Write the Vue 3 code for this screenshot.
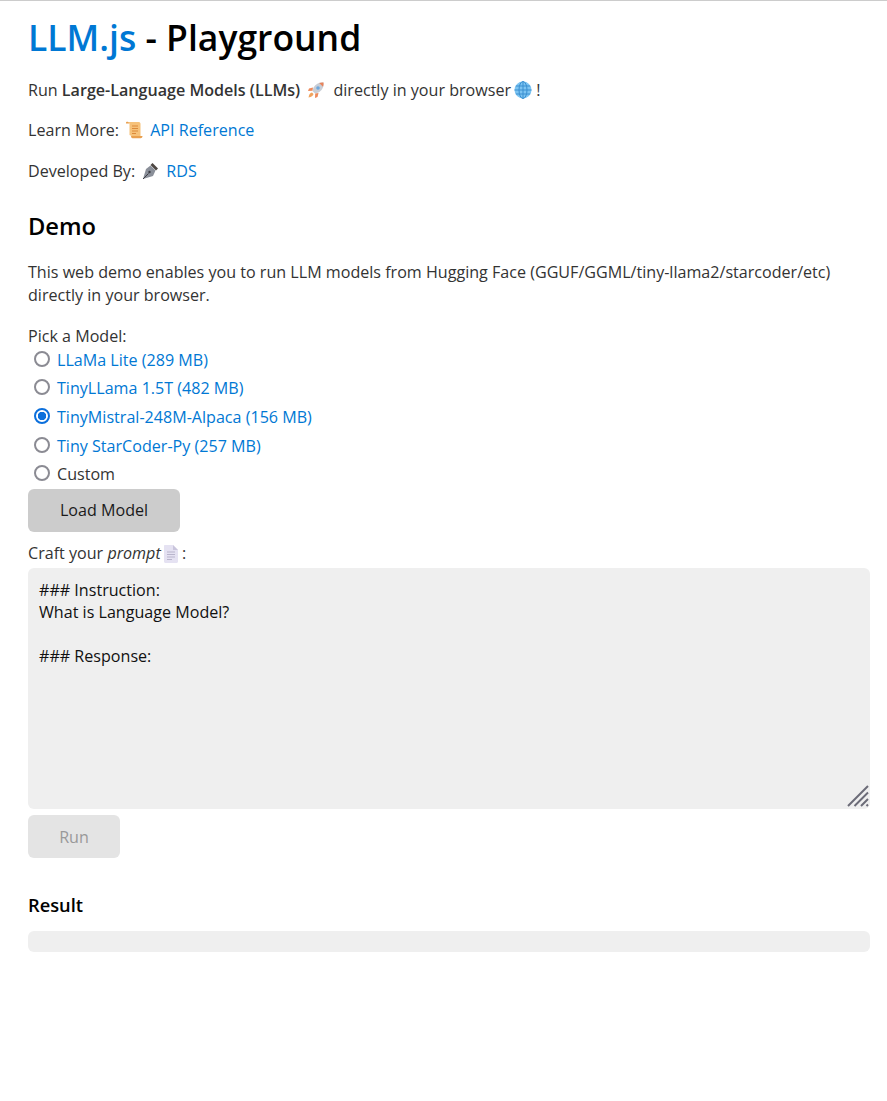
<script setup>
const models = [
  { label: 'LLaMa Lite (289 MB)', link: true },
  { label: 'TinyLLama 1.5T (482 MB)', link: true },
  { label: 'TinyMistral-248M-Alpaca (156 MB)', link: true, checked: true },
  { label: 'Tiny StarCoder-Py (257 MB)', link: true },
  { label: 'Custom', link: false }
]
const prompt = '### Instruction:\nWhat is Language Model?\n\n### Response:\n'
</script>

<template>
  <main class="page">
    <h1 class="title"><a href="#">LLM.js</a> - Playground</h1>
    <p class="para">Run <strong>Large-Language Models (LLMs)</strong>
      <svg class="emoji rocket" viewBox="0 0 20 20"><path d="M17.5 2.500c-4-.5-7.500 1-10 5l-1 3.500 2.500 2.500 3.500-1c4-2.500 5.500-6 5-10z" fill="#c9ced6"/><path d="M17.500 2.500c-1.500-.2-3 0-4.300.5l3.800 3.800c.5-1.300.7-2.800.5-4.300z" fill="#e8835a"/><circle cx="12" cy="8" r="1.800" fill="#6fa8dc"/><path d="M7 7.500 3 8.500l-1 2.500 4.500-.2zM12.500 13l-1 4-2.500 1 .2-4.500z" fill="#ed8a5c"/><path d="M6 12.500c-2 .5-3 2-3.500 5 3-.5 4.500-1.500 5-3.500z" fill="#f0a35e"/></svg>
      directly in your browser
      <svg class="emoji globe" viewBox="0 0 20 20"><circle cx="10" cy="10" r="8.500" fill="#7cc4f2"/><g fill="none" stroke="#3a8fd0" stroke-width="1"><ellipse cx="10" cy="10" rx="4" ry="8.500"/><path d="M10 1.500v17M1.500 10h17M2.800 6h14.400M2.800 14h14.400"/></g></svg>!</p>
    <p class="para">Learn More:
      <svg class="emoji linked" viewBox="0 0 20 20"><path d="M4 2h11c1 0 1.500 1 1.500 2v12h-9l-2-1V4C5.500 3 5 2 4 2z" fill="#f6c27a"/><path d="M2 2.500C2 1.500 5 1.500 5.500 3.500H2zM7 16h11.500c0 1.500-1 2.200-2 2.200H8.500C7.500 18.200 7 17 7 16z" fill="#e9a04f"/><path d="M8 6h6M8 8.500h6M8 11h6M8 13.500h4" stroke="#dc8a3a" stroke-width="1"/></svg>
      <a href="#">API Reference</a></p>
    <p class="para">Developed By:
      <svg class="emoji linked" viewBox="0 0 20 20"><path d="M12.500 2 18 7.500l-2 2L10.500 4z" fill="#4d4642"/><path d="M10.500 4.500 15.500 9.500 13 15 3 18l3-10z" fill="#8a8f99"/><path d="M3 18l5.500-5.500" stroke="#3d3d44" stroke-width="1"/><circle cx="9.500" cy="11" r="1.200" fill="#3d3d44"/></svg>
      <a href="#">RDS</a></p>
    <h2 class="demo">Demo</h2>
    <p class="para intro">This web demo enables you to run LLM models from Hugging Face (GGUF/GGML/tiny-llama2/starcoder/etc) directly in your browser.</p>
    <div class="pick">Pick a Model:</div>
    <div class="models">
      <label v-for="m in models" :key="m.label" class="model">
        <input type="radio" name="model" class="radio" :checked="m.checked" />
        <a v-if="m.link" href="#">{{ m.label }}</a>
        <span v-else>{{ m.label }}</span>
      </label>
    </div>
    <button class="btn load" type="button">Load Model</button>
    <div class="craft">Craft your <em>prompt</em>
      <svg class="doc" viewBox="0 0 16 20"><path d="M2 1h8l5 5v11.500c0 .8-.7 1.500-1.500 1.500h-11C1.700 19 1 18.300 1 17.500V2c0-.6.4-1 1-1z" fill="#e5e2f2"/><path d="M10 1l5 5h-5z" fill="#c9c5dc"/><path d="M4 8h8M4 10.500h8M4 13h8M4 15.500h5" stroke="#b9b5cc" stroke-width="1"/></svg>
      :</div>
    <div class="prompt-wrap">
      <textarea class="prompt" :value="prompt"></textarea>
      <svg class="grip" viewBox="0 0 22 22"><path d="M1 21 21 1M7.500 21 21 7.500M14 21l7-7M19.500 21l1.500-1.500" stroke="#6c6c78" stroke-width="2" fill="none"/></svg>
    </div>
    <button class="btn run" type="button" disabled>Run</button>
    <h3 class="result-title">Result</h3>
    <div class="result"></div>
  </main>
</template>

<style>
html, body { margin: 0; background: #fff; }
</style>

<style scoped>
.page {
  border-top: 1px solid #ccc;
  padding: 0 17px 149px 28px;
  font-family: "Open Sans", "Noto Sans", sans-serif;
  font-size: 16.1px;
  line-height: 23px;
  color: #333;
}
a { color: #0078d4; text-decoration: none; }
.title {
  margin: 0;
  padding: 10px 0 0;
  font-size: 35.500px;
  line-height: 52px;
  font-weight: 600;
  color: #000;
}
.para { margin: 0 0 17.500px; }
.title + .para { margin-top: 15.500px; }
.para strong { font-weight: 600; }
.emoji { width: 20px; height: 20px; vertical-align: -4px; margin: 0 1px; }
.emoji.rocket { margin: 0 3px 0 6px; }
.emoji.globe { margin: 0 3px 0 -2px; }
.emoji.linked { margin-right: 6px; }
.demo {
  margin: 27.500px 0 18.500px;
  font-size: 23.700px;
  line-height: 32px;
  font-weight: 600;
  color: #000;
}
.pick { margin-top: 19.500px; line-height: 20px; }
.models { display: flex; flex-direction: column; }
.model { display: flex; align-items: center; height: 28.600px; }
.radio {
  appearance: none;
  box-sizing: border-box;
  width: 16px;
  height: 16px;
  margin: 0 7px 3px 6px;
  border: 2px solid #8b8b93;
  border-radius: 50%;
  background: #fff;
}
.radio:checked {
  border-color: #0b6fdc;
  background: radial-gradient(circle, #0b6fdc 0 4px, #fff 4.500px);
}
.btn {
  display: block;
  border: none;
  border-radius: 6px;
  font: inherit;
  height: 43px;
  padding: 0;
}
.load { width: 152px; background: #ccc; color: #1a1a1a; padding-top: 1px; }
.craft { margin-top: 9px; line-height: 24px; }
.doc { width: 16px; height: 20px; vertical-align: -5px; margin: 0 -1px 0 2px; }
.prompt-wrap { position: relative; margin-top: 3px; }
.prompt {
  display: block;
  box-sizing: border-box;
  width: 100%;
  height: 241px;
  padding: 11px;
  border: none;
  outline: none;
  border-radius: 6px;
  background: #efefef;
  color: #111;
  font: inherit;
  line-height: 22px;
  resize: none;
}
.grip {
  position: absolute;
  right: 1px;
  bottom: 2px;
  width: 22px;
  height: 22px;
  pointer-events: none;
}
.run { width: 92px; margin-top: 6px; background: #e4e4e4; color: #999; padding-top: 3px; }
.result-title {
  margin: 35px 0 14px;
  font-size: 18.300px;
  line-height: 24px;
  font-weight: 600;
  color: #000;
}
.result { height: 21px; background: #efefef; border-radius: 6px; }
</style>
